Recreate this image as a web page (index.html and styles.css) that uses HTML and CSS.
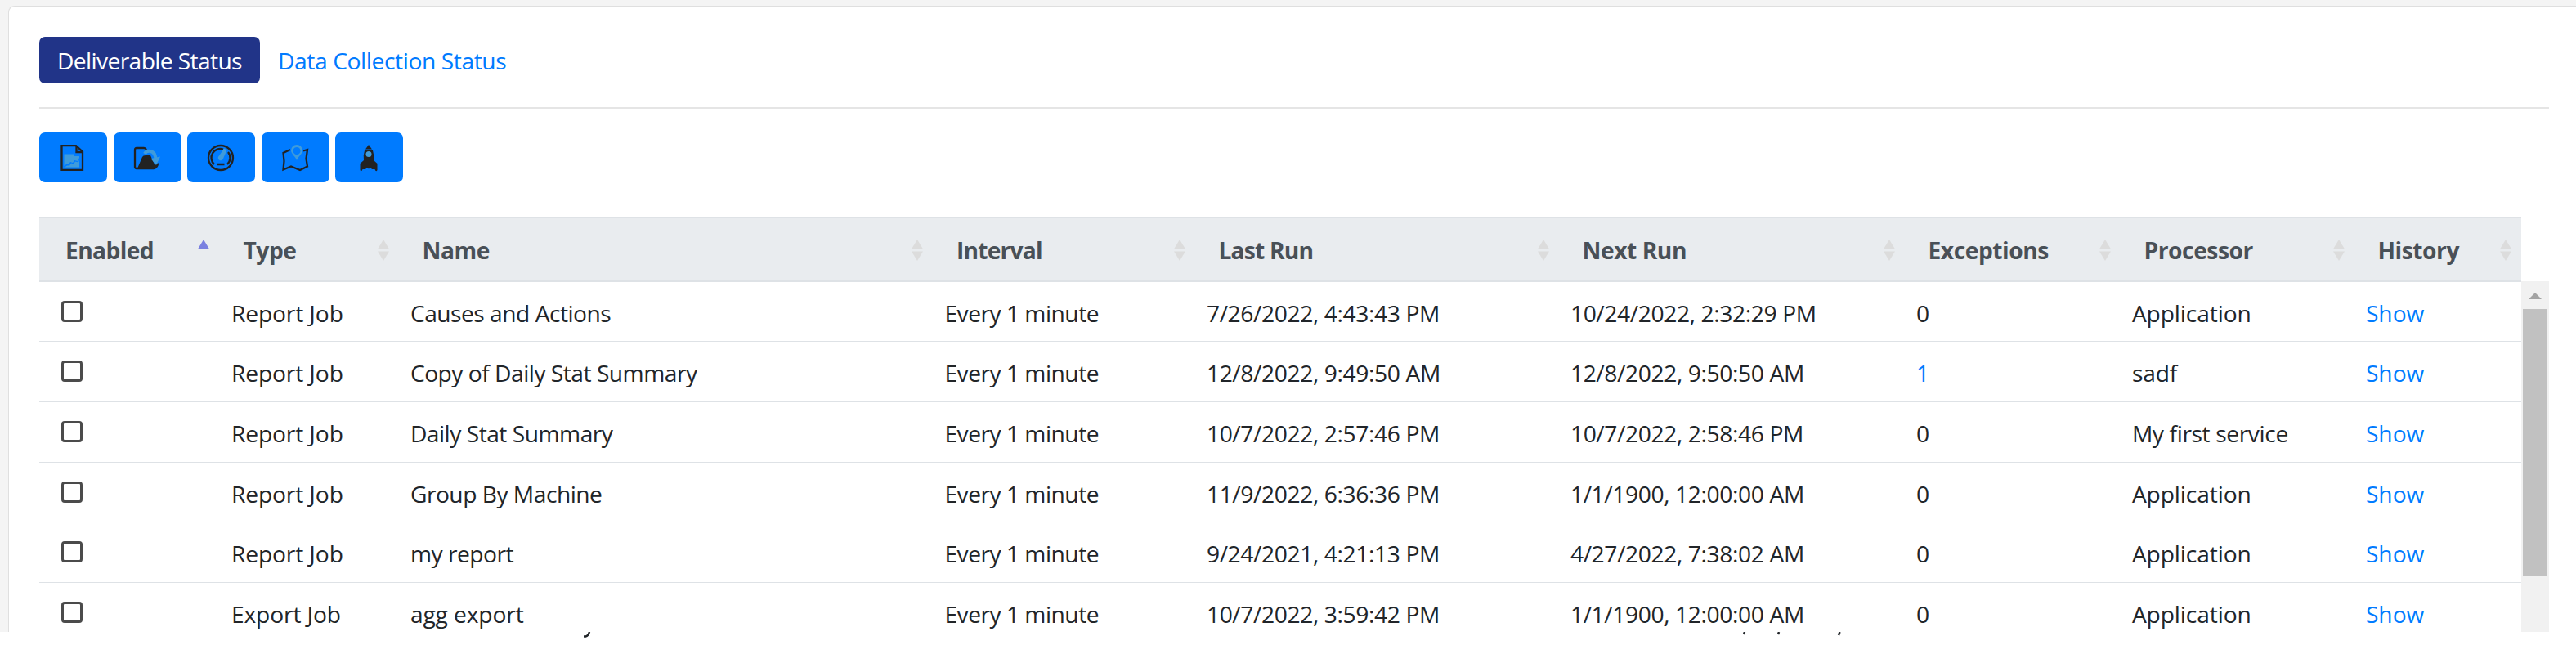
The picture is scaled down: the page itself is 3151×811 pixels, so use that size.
FILE: index.html
```html
<!DOCTYPE html>
<html lang="en"><head><meta charset="utf-8"><title>Deliverable Status</title><link rel="stylesheet" href="styles.css"></head>
<body>
<main class="page"><section class="card">
<nav class="tabs"><a class="tab active"><span>Deliverable Status</span></a><a class="tab"><span>Data Collection Status</span></a></nav>
<hr class="rule">
<div class="toolbar">
<button class="btn"><svg viewBox="0 0 32 32"><path class="ln" d="M2.500 1.200H20L28 8.500V30.800H2.500Z"/><path class="ln" d="M20.500 1V9H28"/><path class="ac" d="M5.500 11.500H18V14H24V16L22 20 18 19 16 22 13 21 11 24 8 24 5.500 26Z"/><path class="ac" d="M5.500 28 9 25.500 12 25.500 14 22.500 17 23.500 19 20.500 23 21.500 24 18V27.500H5.500Z"/></svg></button>
<button class="btn"><svg viewBox="0 0 32 32"><path class="ln" d="M15 6Q14 4 12 4H3Q1 4 1 6V27Q1 29 3 29H24Q27 29 29 24"/><path class="dk" d="M4 29 10 15Q11 13 14 13H20L25 24 31 22 28 27Q27 29.500 24 29.500Z"/><path class="st" d="M13 11Q15 7 20 8Q26 9 26.500 18"/><path class="ac" d="M20.500 17 32 14.500 27 25Z"/></svg></button>
<button class="btn"><svg viewBox="0 0 32 32"><circle class="ln" cx="16" cy="16" r="15"/><path class="ln" d="M8 24A11 11 0 0 1 19 5.500M25 9A11 11 0 0 1 24 24M11.500 24H20.500"/><path class="ac" d="M20 4.500 23.500 6.500 19 17A3.200 3.200 0 1 1 14 13.500Z"/></svg></button>
<button class="btn"><svg viewBox="0 0 32 32"><path class="ln" d="M10 6 1.500 10 2.500 20 1.500 30.500 11 26.500 22 31 31 26.500 29.500 17 31 6 26 7.500"/><path class="ac" fill-rule="evenodd" d="M18 0a7 7 0 0 1 7 7c0 4-5 7-7 12-2-5-7-8-7-12a7 7 0 0 1 7-7zm0 3a4.500 4.500 0 1 0 .1 0z"/></svg></button>
<button class="btn"><svg viewBox="0 0 32 32"><path class="dk" d="M16 0 20 5.500H12ZM11 7H21Q23 13 22 19L26.500 23V31Q25 34 23.500 30H20L18 28 16 29.500 14 28 12 30H8.500Q7 34 5.500 31V23L10 19Q9 13 11 7Z"/><circle class="ac" cx="16" cy="11.500" r="3.500"/></svg></button>
</div>
<div class="table" id="table"></div>
</section></main>
<svg class="marks" viewBox="0 0 3151 38"><path d="M714 5.500H716.500Q719.500 5 721 0M2133 3 2134 0M2175 3 2176 0M2249 4 2250.500 0"/></svg>
<script src="table.js"></script>
</body></html>
```
FILE: styles.css
```css
*{box-sizing:border-box}
body{margin:0;background:#fff;color:#212529;font-family:"Open Sans","Noto Sans",sans-serif;font-size:28.2px;line-height:43px;overflow:hidden}
.page{height:773px;background:#f4f4f4;padding:7px 0 0 10px;overflow:hidden}
.card{height:790px;background:#fff;border:1px solid #dfdfdf;border-right:0;border-radius:8px 0 0 0;padding:37px 33px 0 37px}
.tabs{display:flex;height:57px}
.tab{padding:8px 22px;border-radius:7px;color:#007bff;white-space:nowrap;letter-spacing:-.4px}
.tab span{display:block}
.tab.active{width:270px;background:#213488;color:#fff;letter-spacing:-.62px}
.rule{border:0;height:2px;background:#e5e5e5;margin:29px 0}
.toolbar{display:flex;gap:7.500px;height:61px;margin-bottom:43px}
.btn{width:83px;height:61px;border:0;border-radius:7px;background:#007bff;padding:0 1px 0 0;display:flex;align-items:center;justify-content:center}
.btn svg{width:32px;height:32px;overflow:visible}
.ln{fill:none;stroke:#222;stroke-width:2.300}
.dk{fill:#222}
.ac{fill:#3f9bdb}
.st{fill:none;stroke:#3f9bdb;stroke-width:4}
.row{display:grid;grid-template-columns:220.500px 219px 653.500px 320.500px 445px 423px 264px 286px 204.500px;width:3036px;height:73.750px;border-bottom:1px solid #dee2e6}
.rows .row:first-child{height:73px}
.cell{padding:17px 0 0 14.400px;white-space:nowrap}
.cell span,.th span{display:inline-block}
.tight{letter-spacing:-.5px}
.snug{letter-spacing:-.38px}
.easy{letter-spacing:-.12px}
.row.head{height:79px;background:#e9ecef;border-top:1px solid #dee2e6;border-bottom:2px solid #dee2e6;color:#495057;font-weight:700;letter-spacing:-.45px}
.th{padding:18px 12px 0 29px;display:flex;justify-content:space-between;white-space:nowrap}
.th:first-child{padding-left:32px;padding-right:13px;letter-spacing:-.6px}
.th:nth-child(4),.th:nth-child(5){letter-spacing:-.8px}
.th svg{width:14px;height:26px;margin-top:8px;fill:#dcdcdc}
.th svg.asc{fill:#7a80e0}
.link{color:#007bff}
.check{width:26px;height:26px;border:3px solid #4b4b4b;border-radius:4px;margin:6px 0 0 12.600px}
.viewport{display:flex;height:428px}
.rows{width:3036px}
.scroll{width:34px;margin-top:-1px;background:#f1f1f1;display:flex;flex-direction:column;align-items:center}
.scroll svg{width:16px;height:8px;margin:14px 0 12px;fill:#a3a3a3}
.thumb{width:30px;height:326px;background:#c1c1c1}
.marks{display:block;width:3151px;height:38px;fill:none;stroke:#212529;stroke-width:2.500}
```
FILE: table.js
```js
const heads = ['Enabled', 'Type', 'Name', 'Interval', 'Last Run', 'Next Run', 'Exceptions', 'Processor', 'History'];
const data = [
  ['Report Job', 'Causes and Actions', '7/26/2022, 4:43:43 PM', '10/24/2022, 2:32:29 PM', '0', 'Application'],
  ['Report Job', 'Copy of Daily Stat Summary', '12/8/2022, 9:49:50 AM', '12/8/2022, 9:50:50 AM', '1', 'sadf'],
  ['Report Job', 'Daily Stat Summary', '10/7/2022, 2:57:46 PM', '10/7/2022, 2:58:46 PM', '0', 'My first service'],
  ['Report Job', 'Group By Machine', '11/9/2022, 6:36:36 PM', '1/1/1900, 12:00:00 AM', '0', 'Application'],
  ['Report Job', 'my report', '9/24/2021, 4:21:13 PM', '4/27/2022, 7:38:02 AM', '0', 'Application'],
  ['Export Job', 'agg export', '10/7/2022, 3:59:42 PM', '1/1/1900, 12:00:00 AM', '0', 'Application']
];
const up = '<path d="M7 0 14 11.500H0Z"/>', down = '<path d="M7 26 0 14.500H14Z"/>';
const cell = (t, c = '') => `<div class="cell ${c}"><span>${t}</span></div>`;
document.getElementById('table').innerHTML =
  '<div class="row head">' + heads.map((h, i) =>
    `<div class="th"><span>${h}</span><svg viewBox="0 0 14 26"${i ? '' : ' class="asc"'}>${up}${i ? down : ''}</svg></div>`).join('') + '</div>' +
  '<div class="viewport"><div class="rows">' + data.map(([type, name, last, next, exc, proc]) =>
    '<div class="row"><div class="cell"><div class="check"></div></div>' + cell(type, 'easy') +
    cell(name, name === 'agg export' ? 'easy' : 'tight') + cell('Every 1 minute', 'tight') +
    cell(last, 'snug') + cell(next, 'snug') + cell(exc, exc === '0' ? '' : 'link') +
    cell(proc, proc.startsWith('My') ? 'snug' : 'easy') + cell('Show', 'link') + '</div>').join('') +
  '</div><div class="scroll"><svg viewBox="0 0 16 8"><path d="M8 0 16 8H0Z"/></svg><div class="thumb"></div></div></div>';
```
